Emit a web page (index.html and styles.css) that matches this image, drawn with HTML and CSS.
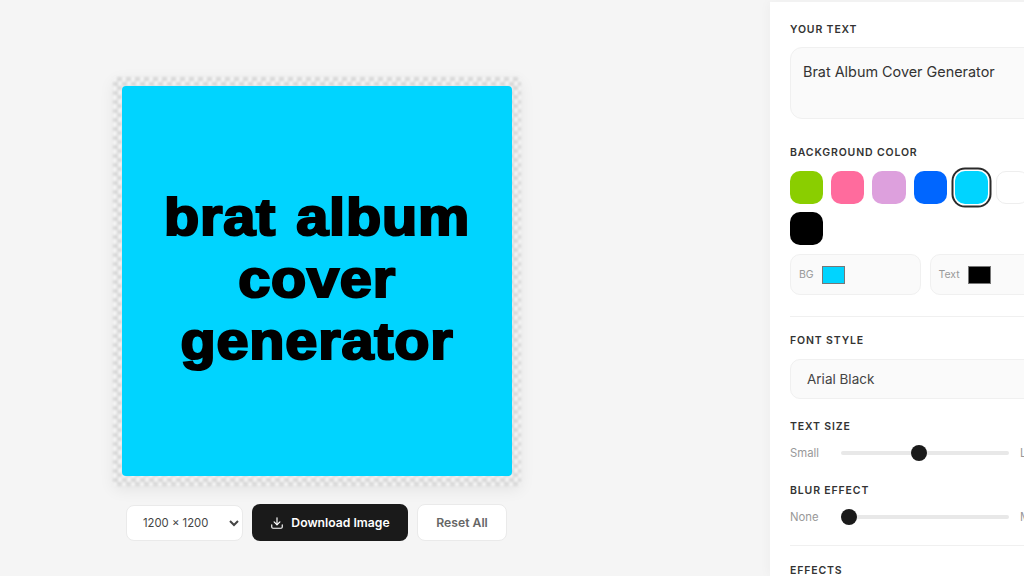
FILE: index.html
```html
<!DOCTYPE html>
<html lang="en">
<head>
<meta charset="utf-8">
<title>Brat Album Cover Generator</title>
<link rel="stylesheet" href="styles.css">
</head>
<body>
<div class="app">
  <main class="stage">
    <div class="frame">
      <div class="cover"><p class="cover-text">brat album cover generator</p></div>
    </div>
    <div class="actions">
      <select class="size-select"><option>1200 × 1200</option></select>
      <button class="btn btn-dark">
        <svg class="dl-icon" viewBox="0 0 24 24" fill="none" stroke="currentColor" stroke-width="2" stroke-linecap="round" stroke-linejoin="round"><path d="M21 15v4a2 2 0 0 1-2 2H5a2 2 0 0 1-2-2v-4"/><polyline points="7 10 12 15 17 10"/><line x1="12" y1="15" x2="12" y2="3"/></svg>
        Download Image
      </button>
      <button class="btn btn-light">Reset All</button>
    </div>
  </main>
  <aside class="panel">
    <section class="group-text">
      <h2 class="label">Your Text</h2>
      <textarea class="text-input">Brat Album Cover Generator</textarea>
    </section>
    <section class="group-color">
      <h2 class="label">Background Color</h2>
      <div class="swatches">
        <span class="swatch green"></span>
        <span class="swatch pink"></span>
        <span class="swatch plum"></span>
        <span class="swatch blue"></span>
        <span class="swatch cyan selected"></span>
        <span class="swatch white"></span>
        <span class="swatch black"></span>
      </div>
      <div class="pickers">
        <div class="picker"><span class="picker-label">BG</span><span class="chip cyan"></span></div>
        <div class="picker"><span class="picker-label">Text</span><span class="chip black"></span></div>
      </div>
    </section>
    <hr class="divider">
    <section class="group-font">
      <h2 class="label">Font Style</h2>
      <div class="font-select">Arial Black</div>
    </section>
    <section class="group-slider">
      <h2 class="label">Text Size</h2>
      <div class="slider-row">
        <span class="slider-label">Small</span>
        <input class="range" type="range" min="0" max="100" value="46">
        <span class="slider-label">Large</span>
      </div>
    </section>
    <section class="group-slider2">
      <h2 class="label">Blur Effect</h2>
      <div class="slider-row">
        <span class="slider-label">None</span>
        <input class="range" type="range" min="0" max="100" value="0">
        <span class="slider-label">Max</span>
      </div>
    </section>
    <hr class="divider divider-low">
    <section class="group-effects">
      <h2 class="label">Effects</h2>
    </section>
  </aside>
</div>
</body>
</html>
```
FILE: styles.css
```css
* { box-sizing: border-box; }
html, body { margin: 0; height: 100%; overflow: hidden; }
body { background: #f5f5f5; font-family: Inter, "Liberation Sans", sans-serif; color: #1a1a1a; }
.app { display: flex; height: 576px; overflow: hidden; }

.stage { flex: none; width: 770px; padding: 78px 136px 0 0; display: flex; flex-direction: column; align-items: center; }
.frame {
  position: relative;
  width: 406px; height: 407px; padding: 8px;
  box-shadow: 0 4px 16px rgba(0,0,0,.08);
  border-radius: 4px;
}
.frame::before {
  content: ""; position: absolute; inset: -1px; border-radius: 4px;
  background-color: #eee;
  background-image: conic-gradient(#d8d8d8 25%, #f3f3f3 0 50%, #d8d8d8 0 75%, #f3f3f3 0);
  background-size: 9px 9px;
  filter: blur(.9px);
}
.cover { position: relative; width: 390px; height: 390px; background: #00d4ff; border-radius: 4px; display: flex; align-items: center; justify-content: center; padding: 0 10px; }
.cover-text {
  margin: 0; width: 320px; text-align: center; color: #000;
  font-family: "Liberation Sans", Arial, sans-serif; font-weight: 700; font-size: 51px; line-height: 62px;
  -webkit-text-stroke: 2.2px #000; letter-spacing: .7px; word-spacing: 3px; filter: blur(.7px);
  transform: translateY(-1.5px) scaleX(1.13);
}

.actions { width: 382px; display: flex; align-items: center; gap: 9px; margin-top: 19px; }
.size-select {
  width: 117px; height: 36px; padding: 0 4px 0 12px;
  background: #fff; border: 1px solid #eaeaea; border-radius: 8px;
  font: 400 11.3px Inter, sans-serif; color: #444;
}
.btn { height: 37px; border-radius: 8px; font: 600 12.2px Inter, sans-serif; display: flex; align-items: center; justify-content: center; gap: 6px; padding: 0; }
.btn-dark { width: 156px; background: #1a1a1a; color: #fff; border: 0; }
.btn-light { width: 90px; background: #fff; color: #666; border: 1px solid #eaeaea; }
.dl-icon { width: 14px; height: 14px; margin-right: 1px; }

.panel { flex: none; width: 310px; height: 574px; margin-top: 2px; padding: 20px 20px 0; background: #fff; box-shadow: -2px 0 10px rgba(0,0,0,.03); overflow: hidden; }
.label { margin: 0; font-size: 10.5px; line-height: 16px; font-weight: 600; letter-spacing: .85px; text-transform: uppercase; color: #333; }
.text-input {
  display: block; width: 100%; height: 72px; margin-top: 9px; padding: 15px 12px;
  background: #fafafa; border: 1px solid #f0f0f0; border-radius: 12px; resize: none;
  font: 400 14.4px/18px Inter, sans-serif; color: #333; outline: none;
}
.group-color { margin-top: 26px; }
.swatches { display: flex; flex-wrap: wrap; gap: 8px; margin-top: 10px; }
.swatch { width: 33.2px; height: 33px; border-radius: 10px; }
.green { background: #8ace00; }
.pink { background: #ff6b9d; }
.plum { background: #dda0dd; }
.blue { background: #0066ff; }
.cyan { background: #00d4ff; }
.white { background: #fff; border: 1px solid #eee; }
.black { background: #000; }
.selected { box-shadow: 0 0 0 1.5px #fff, 0 0 0 3.5px #2a2a2a; }
.pickers { display: flex; gap: 9px; margin-top: 9px; }
.picker { flex: 1; height: 41px; display: flex; align-items: center; gap: 8px; padding: 0 8px; background: #fafafa; border: 1px solid #f0f0f0; border-radius: 10px; }
.picker-label { font-size: 10.5px; color: #999; }
.chip { width: 23px; height: 18px; border: 1px solid #777; }
.divider { border: 0; border-top: 1px solid #f0f0f0; margin: 21px 0 0; }
.divider-low { margin-top: 19px; }
.group-font { margin-top: 16px; }
.font-select { height: 40px; margin-top: 10px; padding: 0 16px; display: flex; align-items: center; background: #fafafa; border: 1px solid #f0f0f0; border-radius: 10px; font-size: 13.5px; color: #444; }
.group-slider { margin-top: 20px; }
.group-slider2 { margin-top: 21px; }
.slider-row { display: flex; align-items: center; gap: 11px; margin-top: 9px; height: 18px; }
.slider-label { flex: none; width: 40px; font-size: 11.3px; color: #999; }
.range { flex: 1; min-width: 0; margin: 0; height: 16px; background: transparent; -webkit-appearance: none; appearance: none; }
.range::-webkit-slider-runnable-track { height: 4px; background: #e8e8e8; border-radius: 2px; }
.range::-webkit-slider-thumb { -webkit-appearance: none; width: 16px; height: 16px; margin-top: -6px; border-radius: 50%; background: #1a1a1a; }
.group-effects { margin-top: 17px; }
```
